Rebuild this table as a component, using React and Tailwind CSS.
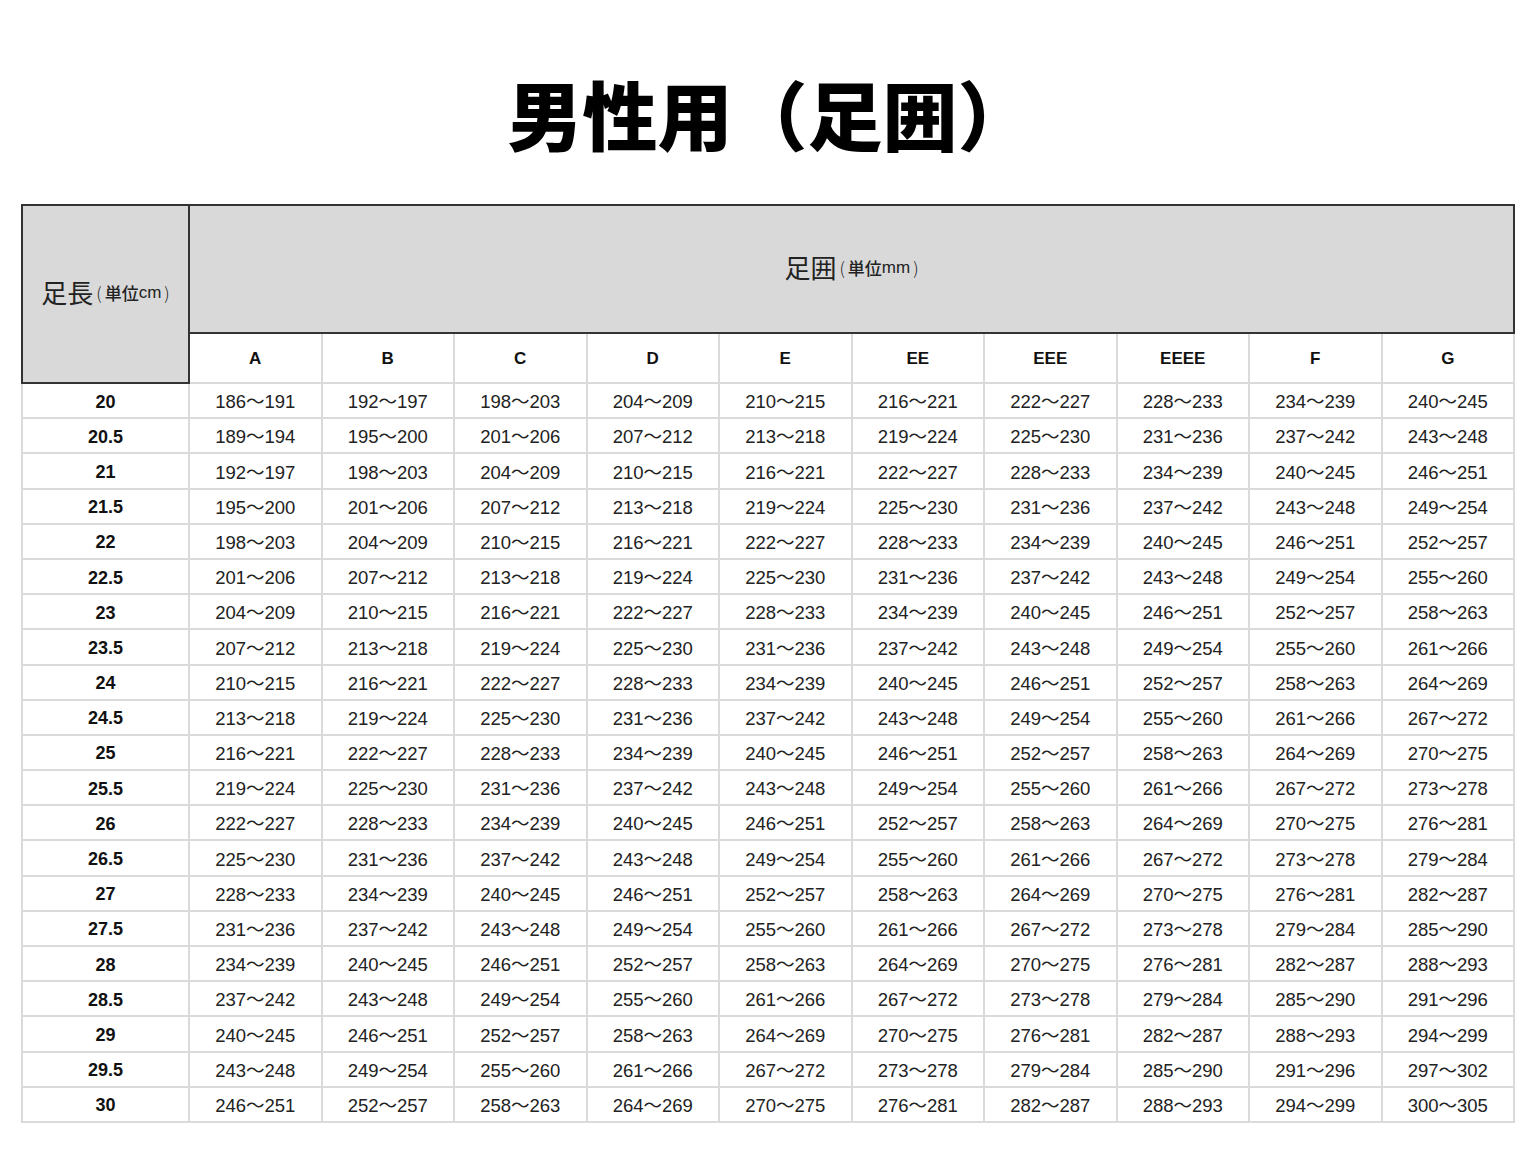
import React from 'react';

const FONT = { fontFamily: '"Liberation Sans", "Noto Sans CJK JP", sans-serif' };
const CJK = { fontFamily: '"Noto Sans CJK JP", "Liberation Sans", sans-serif' };

const WIDTHS = ['A', 'B', 'C', 'D', 'E', 'EE', 'EEE', 'EEEE', 'F', 'G'];

// foot lengths 20..30 in 0.5 steps, first A range starts at 186 and +3 per half size
const rows = Array.from({ length: 21 }).map((_, i) => {
  const len = 20 + i * 0.5;
  const base = 186 + i * 3;
  return {
    label: String(len),
    cells: WIDTHS.map((_, j) => {
      const lo = base + j * 6;
      return `${lo}～${lo + 5}`;
    }),
  };
});

const HeadLabel = ({ main, unit }) => (
  <div className="flex items-center -mt-[4px]" style={CJK}>
    <span className="text-[26px] leading-none">{main}</span>
    <span className="text-[17px] leading-none ml-[3px] font-medium flex items-center">
      <span className="font-light mr-[3px]">(</span>
      <span>単位</span>
      <span style={FONT}>{unit}</span>
      <span className="font-light ml-[3px]">)</span>
    </span>
  </div>
);

export default function App() {
  return (
    <div className="w-[1536px] h-[1152px] bg-white text-[#222]" style={FONT}>
      {/* Title */}
      <div className="h-[204px] flex items-start justify-center pt-[63px]">
        <h1 className="text-[75px] leading-[100px] font-black text-black pl-[4px]" style={CJK}>
          男性用（足囲）
        </h1>
      </div>

      {/* Table */}
      <div className="ml-[21px] w-[1494px] grid grid-cols-[169px_repeat(10,minmax(0,1fr))]">
        <div className="row-span-2 bg-[#d9d9d9] border-2 border-[#333] flex items-center justify-center">
          <HeadLabel main="足長" unit="cm" />
        </div>
        <div className="col-span-10 h-[130px] bg-[#d9d9d9] border-y-2 border-r-2 border-[#333] flex items-center justify-center">
          <HeadLabel main="足囲" unit="mm" />
        </div>
        {WIDTHS.map((w) => (
          <div
            key={w}
            className="h-[50px] pt-[2px] flex items-center justify-center font-bold text-[17px] text-[#111] border-r-2 border-b-2 border-[#dadada]"
          >
            {w}
          </div>
        ))}

        {rows.map((r) => (
          <React.Fragment key={r.label}>
            <div className="h-[35.2px] pt-[3px] flex items-center justify-center font-bold text-[18px] text-[#111] border-l-2 border-r-2 border-b-2 border-[#dadada]">
              {r.label}
            </div>
            {r.cells.map((c, j) => (
              <div
                key={j}
                className="h-[35.2px] pt-[3px] flex items-center justify-center text-[18.5px] border-r-2 border-b-2 border-[#dadada]"
              >
                {c}
              </div>
            ))}
          </React.Fragment>
        ))}
      </div>
    </div>
  );
}
